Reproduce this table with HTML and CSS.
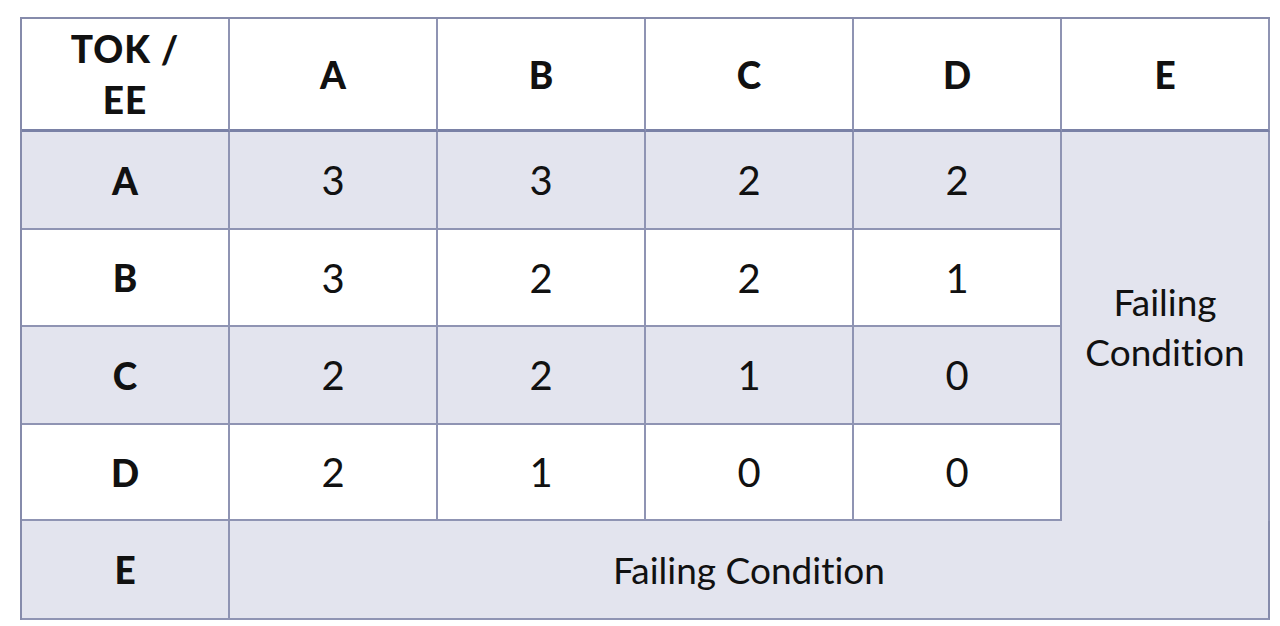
FILE: index.html
```html
<!DOCTYPE html>
<html>
<head>
<meta charset="utf-8">
<link rel="stylesheet" href="styles.css">
</head>
<body>
<div class="grid">
  <div class="cell head corner">TOK /<br>EE</div>
  <div class="cell head">A</div>
  <div class="cell head">B</div>
  <div class="cell head">C</div>
  <div class="cell head">D</div>
  <div class="cell head">E</div>

  <div class="cell label shade">A</div>
  <div class="cell num shade">3</div>
  <div class="cell num shade">3</div>
  <div class="cell num shade">2</div>
  <div class="cell num shade">2</div>
  <div class="cell fail shade ecol">Failing<br>Condition</div>

  <div class="cell label">B</div>
  <div class="cell num">3</div>
  <div class="cell num">2</div>
  <div class="cell num">2</div>
  <div class="cell num">1</div>

  <div class="cell label shade">C</div>
  <div class="cell num shade">2</div>
  <div class="cell num shade">2</div>
  <div class="cell num shade">1</div>
  <div class="cell num shade">0</div>

  <div class="cell label">D</div>
  <div class="cell num">2</div>
  <div class="cell num">1</div>
  <div class="cell num">0</div>
  <div class="cell num">0</div>

  <div class="cell label shade">E</div>
  <div class="cell fail shade erow">Failing Condition</div>
</div>
</body>
</html>
```

FILE: styles.css
```css
html, body {
  margin: 0;
  padding: 0;
  background: #ffffff;
}
body {
  padding: 17px 0 0 20px;
}
.grid {
  width: 1250px;
  box-sizing: border-box;
  display: grid;
  grid-template-columns: 208px 208px 208px 208px 208px 208px;
  grid-template-rows: 113px 98px 97px 98px 96px 99px;
  border-left: 2px solid #868bab;
  border-top: 2px solid #868bab;
  font-family: "Lato", "Liberation Sans", sans-serif;
  font-variant-ligatures: none;
  color: #111111;
}
.cell {
  box-sizing: border-box;
  border-right: 2px solid #8f94b3;
  border-bottom: 2px solid #8f94b3;
  background: #ffffff;
  display: flex;
  align-items: center;
  justify-content: center;
  text-align: center;
}
.shade {
  background: #e3e4ee;
}
.head {
  border-bottom: 3px solid #7a81a6;
  font-weight: 900;
  font-size: 37px;
  line-height: 51px;
}
.corner {
  font-size: 37px;
  letter-spacing: 1px;
}
.label {
  font-weight: 900;
  font-size: 37px;
}
.num {
  font-weight: 400;
  font-size: 40px;
}
.fail {
  font-weight: 400;
  font-size: 37px;
  line-height: 50px;
}
.ecol {
  grid-column: 6;
  grid-row: 2 / span 4;
  border-bottom: none;
}
.erow {
  grid-column: 2 / span 5;
  border-right-color: #868bab;
}
```
